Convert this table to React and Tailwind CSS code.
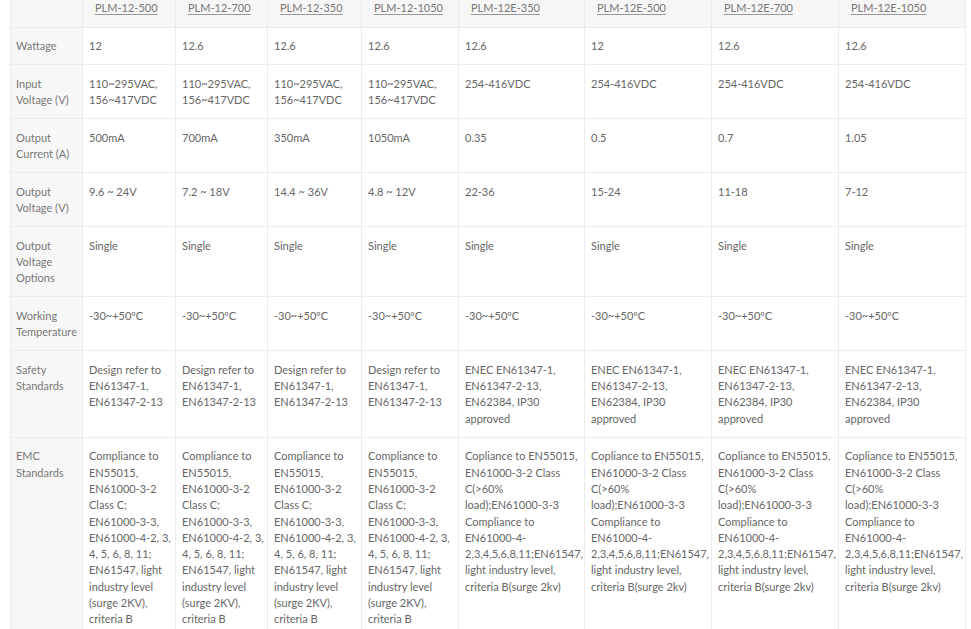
const MODELS = [
  "PLM-12-500",
  "PLM-12-700",
  "PLM-12-350",
  "PLM-12-1050",
  "PLM-12E-350",
  "PLM-12E-500",
  "PLM-12E-700",
  "PLM-12E-1050",
];

const WIDTHS = ["w-[72px]", "w-[93px]", "w-[92px]", "w-[94px]", "w-[97px]", "w-[126px]", "w-[127px]", "w-[127px]", "w-[127px]"];

// lines as they wrap in the source page
const E_EMC_LINES = [
  "Copliance to EN55015,",
  "EN61000-3-2 Class",
  "C(>60%",
  "load);EN61000-3-3",
  "Compliance to",
  "EN61000-4-",
  "2,3,4,5,6,8,11;EN61547,",
  "light industry level,",
  "criteria B(surge 2kv)",
];

const E_EMC = (
  <>
    {E_EMC_LINES.map((l) => (
      <span key={l} className="block whitespace-nowrap">
        {l}
      </span>
    ))}
  </>
);

const PLM_EMC = (
  <>
    Compliance to EN55015, EN61000-3-2 Class C; EN61000-3-3, EN61000-4-2, 3, 4, 5, 6, 8, 11; EN61547, light industry level (surge 2KV), criteria B
  </>
);

const ROWS = [
  { label: "Wattage", cells: ["12", "12.6", "12.6", "12.6", "12.6", "12", "12.6", "12.6"] },
  {
    label: "Input Voltage (V)",
    cells: [
      "110~295VAC, 156~417VDC",
      "110~295VAC, 156~417VDC",
      "110~295VAC, 156~417VDC",
      "110~295VAC, 156~417VDC",
      "254-416VDC",
      "254-416VDC",
      "254-416VDC",
      "254-416VDC",
    ],
  },
  { label: "Output Current (A)", cells: ["500mA", "700mA", "350mA", "1050mA", "0.35", "0.5", "0.7", "1.05"] },
  {
    label: "Output Voltage (V)",
    cells: ["9.6 ~ 24V", "7.2 ~ 18V", "14.4 ~ 36V", "4.8 ~ 12V", "22-36", "15-24", "11-18", "7-12"],
  },
  { label: "Output Voltage Options", cells: Array(8).fill("Single") },
  { label: "Working Temperature", cells: Array(8).fill("-30~+50ºC") },
  {
    label: "Safety Standards",
    cells: [
      "Design refer to EN61347-1, EN61347-2-13",
      "Design refer to EN61347-1, EN61347-2-13",
      "Design refer to EN61347-1, EN61347-2-13",
      "Design refer to EN61347-1, EN61347-2-13",
      "ENEC EN61347-1, EN61347-2-13, EN62384, IP30 approved",
      "ENEC EN61347-1, EN61347-2-13, EN62384, IP30 approved",
      "ENEC EN61347-1, EN61347-2-13, EN62384, IP30 approved",
      "ENEC EN61347-1, EN61347-2-13, EN62384, IP30 approved",
    ],
  },
  {
    label: "EMC Standards",
    cells: [PLM_EMC, PLM_EMC, PLM_EMC, PLM_EMC, E_EMC, E_EMC, E_EMC, E_EMC],
  },
];

export default function App() {
  return (
    <div className="w-[971px] h-[629px] overflow-hidden bg-white font-['Lato','Liberation_Sans',sans-serif] text-[11px] leading-[16.3px] text-[#666]">
      <table className="ml-[10px] w-[955px] table-fixed border-collapse">
        <colgroup>
          {WIDTHS.map((w, i) => (
            <col key={i} className={w} />
          ))}
        </colgroup>
        <thead>
          <tr className="bg-[#f6f6f6]">
            <th className="h-[27px] border-x border-b border-[#ececec] p-0" />
            {MODELS.map((m) => (
              <th
                key={m}
                className="h-[27px] border-x border-b border-[#ececec] pl-[12px] pr-1 pt-0 pb-[10px] text-left align-top font-normal"
              >
                <a href="#" className="text-[#777] underline underline-offset-2 decoration-[#999]">
                  {m}
                </a>
              </th>
            ))}
          </tr>
        </thead>
        <tbody>
          {ROWS.map((r) => (
            <tr key={r.label}>
              <td className="border border-[#ececec] bg-[#f7f7f7] pl-[5px] pr-1 pt-[10.4px] pb-[10px] align-top text-[#777]">
                {r.label}
              </td>
              {r.cells.map((c, i) => (
                <td
                  key={i}
                  className="border border-[#ececec] bg-white pl-[6px] pr-[3px] pt-[10.4px] pb-[10px] align-top"
                >
                  {c}
                </td>
              ))}
            </tr>
          ))}
        </tbody>
      </table>
    </div>
  );
}
